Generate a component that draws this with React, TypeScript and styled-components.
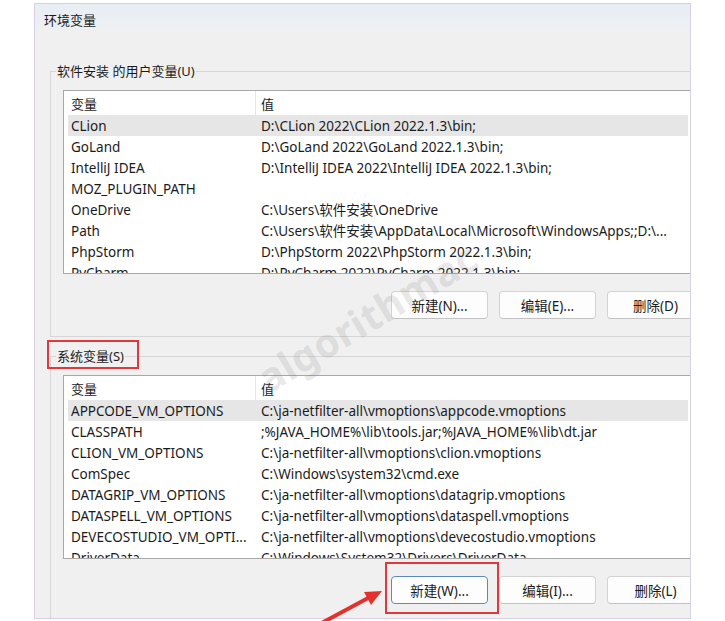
import React from "react";
import styled, { createGlobalStyle, css } from "styled-components";

const GlobalStyle = createGlobalStyle`
  html, body {
    margin: 0;
    padding: 0;
    background: #ffffff;
  }
  body {
    font-family: "Noto Sans", "Noto Sans CJK SC", sans-serif;
    color: #1b1b1b;
  }
`;

const Page = styled.div`
  position: relative;
  width: 725px;
  height: 621px;
  padding: 3px 0 0 34px;
  box-sizing: border-box;
  overflow: hidden;
`;

const Window = styled.div`
  width: 657px;
  height: 616px;
  box-sizing: border-box;
  border: 1px solid #dccde6;
  background: #f0f0f0;
  overflow: hidden;
  display: flex;
  flex-direction: column;
`;

const TitleBar = styled.div`
  height: 31px;
  flex: none;
  display: flex;
  align-items: center;
  padding-left: 9px;
  font-size: 13px;
  background: linear-gradient(180deg, #e9eef5 0%, #eceff3 60%, #f0f0f0 100%);
`;

const Body = styled.div`
  padding-top: 27px;
  display: flex;
  flex-direction: column;
`;

const GroupBox = styled.fieldset<{ $gap?: number }>`
  margin: ${({ $gap }) => $gap ?? 0}px 0 0 15px;
  padding: 0 12px 17px 12px;
  min-width: 0;
  width: 668px;
  box-sizing: border-box;
  border: 1px solid #d6d6d6;
  border-right: none;
`;

const Legend = styled.legend`
  margin-left: -7px;
  padding: 0 1px;
  font-size: 13px;
  line-height: 18px;
  height: 18px;
`;

const List = styled.div`
  margin-top: 10px;
  width: 642px;
  height: 182px;
  border: 1px solid #a8a8a8;
  background: #ffffff;
  overflow: hidden;
  font-size: 13.5px;
`;

const HeaderRow = styled.div`
  display: grid;
  grid-template-columns: 191px 1fr;
  height: 24px;
  align-items: stretch;
`;

const HeaderCell = styled.div<{ $divider?: boolean }>`
  display: flex;
  align-items: center;
  font-size: 13px;
  padding-left: ${({ $divider }) => ($divider ? 5 : 7)}px;
  ${({ $divider }) =>
    $divider &&
    css`
      border-left: 1px solid #e5e5e5;
    `}
`;

const Row = styled.div<{ $selected?: boolean }>`
  display: grid;
  grid-template-columns: 188px 1fr;
  height: 21px;
  margin: 0 18px 0 4px;
  align-items: center;
  white-space: nowrap;
  background: ${({ $selected }) => ($selected ? "#e6e6e6" : "transparent")};
`;

const Cell = styled.div<{ $value?: boolean }>`
  padding-left: ${({ $value }) => ($value ? 5 : 3)}px;
  overflow: hidden;
  line-height: 21px;
  padding-top: 1px;
`;

const ButtonRow = styled.div`
  width: 641px;
  display: flex;
  justify-content: flex-end;
  gap: 11px;
  margin-top: 17px;
`;

const Button = styled.button<{ $focused?: boolean }>`
  width: 97px;
  height: 28px;
  padding: 0;
  border-radius: 4px;
  background: #fdfdfd;
  font-family: "Noto Sans", "Noto Sans CJK SC", sans-serif;
  font-size: 13.5px;
  color: #1b1b1b;
  border: 1px solid #d3d3d3;
  border-bottom-color: #c2c2c2;
  ${({ $focused }) =>
    $focused &&
    css`
      border: 1px solid #5a8ac2;
    `}
`;

const RedBox = styled.div<{ $x: number; $y: number; $w: number; $h: number }>`
  position: absolute;
  left: ${({ $x }) => $x}px;
  top: ${({ $y }) => $y}px;
  width: ${({ $w }) => $w}px;
  height: ${({ $h }) => $h}px;
  box-sizing: border-box;
  border: 2px solid #e2383c;
  pointer-events: none;
`;

const Arrow = styled.svg`
  position: absolute;
  left: 310px;
  top: 580px;
  width: 80px;
  height: 45px;
`;

const Watermark = styled.div`
  position: absolute;
  left: 367px;
  top: 317px;
  transform: translate(-50%, -50%) rotate(-31deg);
  font-family: "Noto Sans", sans-serif;
  font-weight: 700;
  font-size: 40px;
  letter-spacing: 0.5px;
  color: rgba(120, 120, 120, 0.18);
  white-space: nowrap;
  pointer-events: none;
`;

type EnvVar = [string, string];

const userVars: EnvVar[] = [
  ["CLion", "D:\\CLion 2022\\CLion 2022.1.3\\bin;"],
  ["GoLand", "D:\\GoLand 2022\\GoLand 2022.1.3\\bin;"],
  ["IntelliJ IDEA", "D:\\IntelliJ IDEA 2022\\IntelliJ IDEA 2022.1.3\\bin;"],
  ["MOZ_PLUGIN_PATH", ""],
  ["OneDrive", "C:\\Users\\软件安装\\OneDrive"],
  ["Path", "C:\\Users\\软件安装\\AppData\\Local\\Microsoft\\WindowsApps;;D:\\..."],
  ["PhpStorm", "D:\\PhpStorm 2022\\PhpStorm 2022.1.3\\bin;"],
  ["PyCharm", "D:\\PyCharm 2022\\PyCharm 2022.1.3\\bin;"],
];

const systemVars: EnvVar[] = [
  ["APPCODE_VM_OPTIONS", "C:\\ja-netfilter-all\\vmoptions\\appcode.vmoptions"],
  ["CLASSPATH", ";%JAVA_HOME%\\lib\\tools.jar;%JAVA_HOME%\\lib\\dt.jar"],
  ["CLION_VM_OPTIONS", "C:\\ja-netfilter-all\\vmoptions\\clion.vmoptions"],
  ["ComSpec", "C:\\Windows\\system32\\cmd.exe"],
  ["DATAGRIP_VM_OPTIONS", "C:\\ja-netfilter-all\\vmoptions\\datagrip.vmoptions"],
  ["DATASPELL_VM_OPTIONS", "C:\\ja-netfilter-all\\vmoptions\\dataspell.vmoptions"],
  ["DEVECOSTUDIO_VM_OPTI...", "C:\\ja-netfilter-all\\vmoptions\\devecostudio.vmoptions"],
  ["DriverData", "C:\\Windows\\System32\\Drivers\\DriverData"],
];

const VarList: React.FC<{ items: EnvVar[] }> = ({ items }) => (
  <List>
    <HeaderRow>
      <HeaderCell>变量</HeaderCell>
      <HeaderCell $divider>值</HeaderCell>
    </HeaderRow>
    {items.map(([name, value], i) => (
      <Row key={name} $selected={i === 0}>
        <Cell>{name}</Cell>
        <Cell $value>{value}</Cell>
      </Row>
    ))}
  </List>
);

export default function App() {
  return (
    <>
      <GlobalStyle />
      <Page>
        <Window>
          <TitleBar>环境变量</TitleBar>
          <Body>
            <GroupBox>
              <Legend>软件安装 的用户变量(U)</Legend>
              <VarList items={userVars} />
              <ButtonRow>
                <Button>新建(N)...</Button>
                <Button>编辑(E)...</Button>
                <Button>删除(D)</Button>
              </ButtonRow>
            </GroupBox>
            <GroupBox $gap={10}>
              <Legend>系统变量(S)</Legend>
              <VarList items={systemVars} />
              <ButtonRow>
                <Button $focused>新建(W)...</Button>
                <Button>编辑(I)...</Button>
                <Button>删除(L)</Button>
              </ButtonRow>
            </GroupBox>
          </Body>
        </Window>

        <Watermark>algorithmac</Watermark>

        <RedBox $x={47} $y={340} $w={92} $h={29} />
        <RedBox $x={385} $y={562} $w={114} $h={52} />
        <Arrow viewBox="0 0 80 45">
          <line x1="8" y1="45" x2="60" y2="17" stroke="#e3322d" strokeWidth="4" />
          <polygon points="72,11 61,25 54,12" fill="#e3322d" />
        </Arrow>
      </Page>
    </>
  );
}
